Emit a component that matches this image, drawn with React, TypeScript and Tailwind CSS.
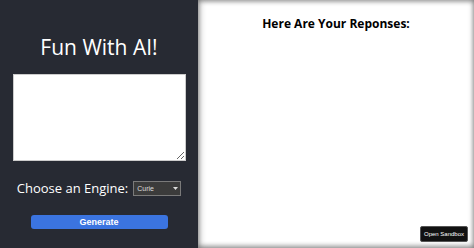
import { useState } from "react"

export default function App() {
  const [engine, setEngine] = useState("curie")
  const [prompt, setPrompt] = useState("")

  return (
    <div className="flex h-[248px] w-[474px] overflow-hidden bg-white" style={{ fontFamily: '"Open Sans", sans-serif' }}>
      <div className="flex w-[198px] shrink-0 flex-col items-center bg-[#272a33] text-white">
        <h1 className="mt-[32px] text-[21px] font-normal leading-[30px]">Fun With AI!</h1>
        <textarea
          value={prompt}
          onChange={(e) => setPrompt(e.target.value)}
          className="mt-[12px] h-[87px] w-[173px] border border-[#ccc] bg-white text-black"
        />
        <div className="mt-[19px] flex items-center gap-[5px]">
          <span className="text-[13px] font-normal leading-[16px]">Choose an Engine:</span>
          <div className="relative">
            <select
              value={engine}
              onChange={(e) => setEngine(e.target.value)}
              className="block h-[15px] w-[48px] appearance-none border border-[#7a7a7a] bg-[#3b3b3b] pl-[3px] text-[7px] leading-[13px] text-[#ddd]"
              style={{ fontFamily: '"Liberation Sans", sans-serif' }}
            >
              <option value="curie">Curie</option>
              <option value="davinci">Davinci</option>
            </select>
            <svg className="pointer-events-none absolute right-[3px] top-[6px]" width="5" height="3" viewBox="0 0 5 3">
              <path d="M0 0 L5 0 L2.5 3 Z" fill="#ddd" />
            </svg>
          </div>
        </div>
        <button
          className="mt-[19px] h-[14px] w-[137px] rounded-[3px] bg-[#3b74e0] text-[9px] font-bold leading-[14px] text-white"
          style={{ fontFamily: '"Liberation Sans", sans-serif' }}
        >
          Generate
        </button>
      </div>
      <div className="relative flex flex-1 flex-col items-center bg-white shadow-[inset_2px_0_6px_rgba(0,0,0,0.3),inset_0_2px_4px_rgba(0,0,0,0.2),inset_0_-3px_4px_rgba(0,0,0,0.2),inset_-3px_0_4px_rgba(0,0,0,0.1)]">
        <h2 className="mt-[15px] text-[12px] font-bold leading-[18px]">Here Are Your Reponses:</h2>
        <button
          className="absolute bottom-[6px] right-[6px] rounded-[2px] border border-[#555] bg-[#111] px-[3px] py-[3px] text-[6px] leading-[8px] text-white"
          style={{ fontFamily: '"Liberation Sans", sans-serif' }}
        >
          Open Sandbox
        </button>
      </div>
    </div>
  )
}
